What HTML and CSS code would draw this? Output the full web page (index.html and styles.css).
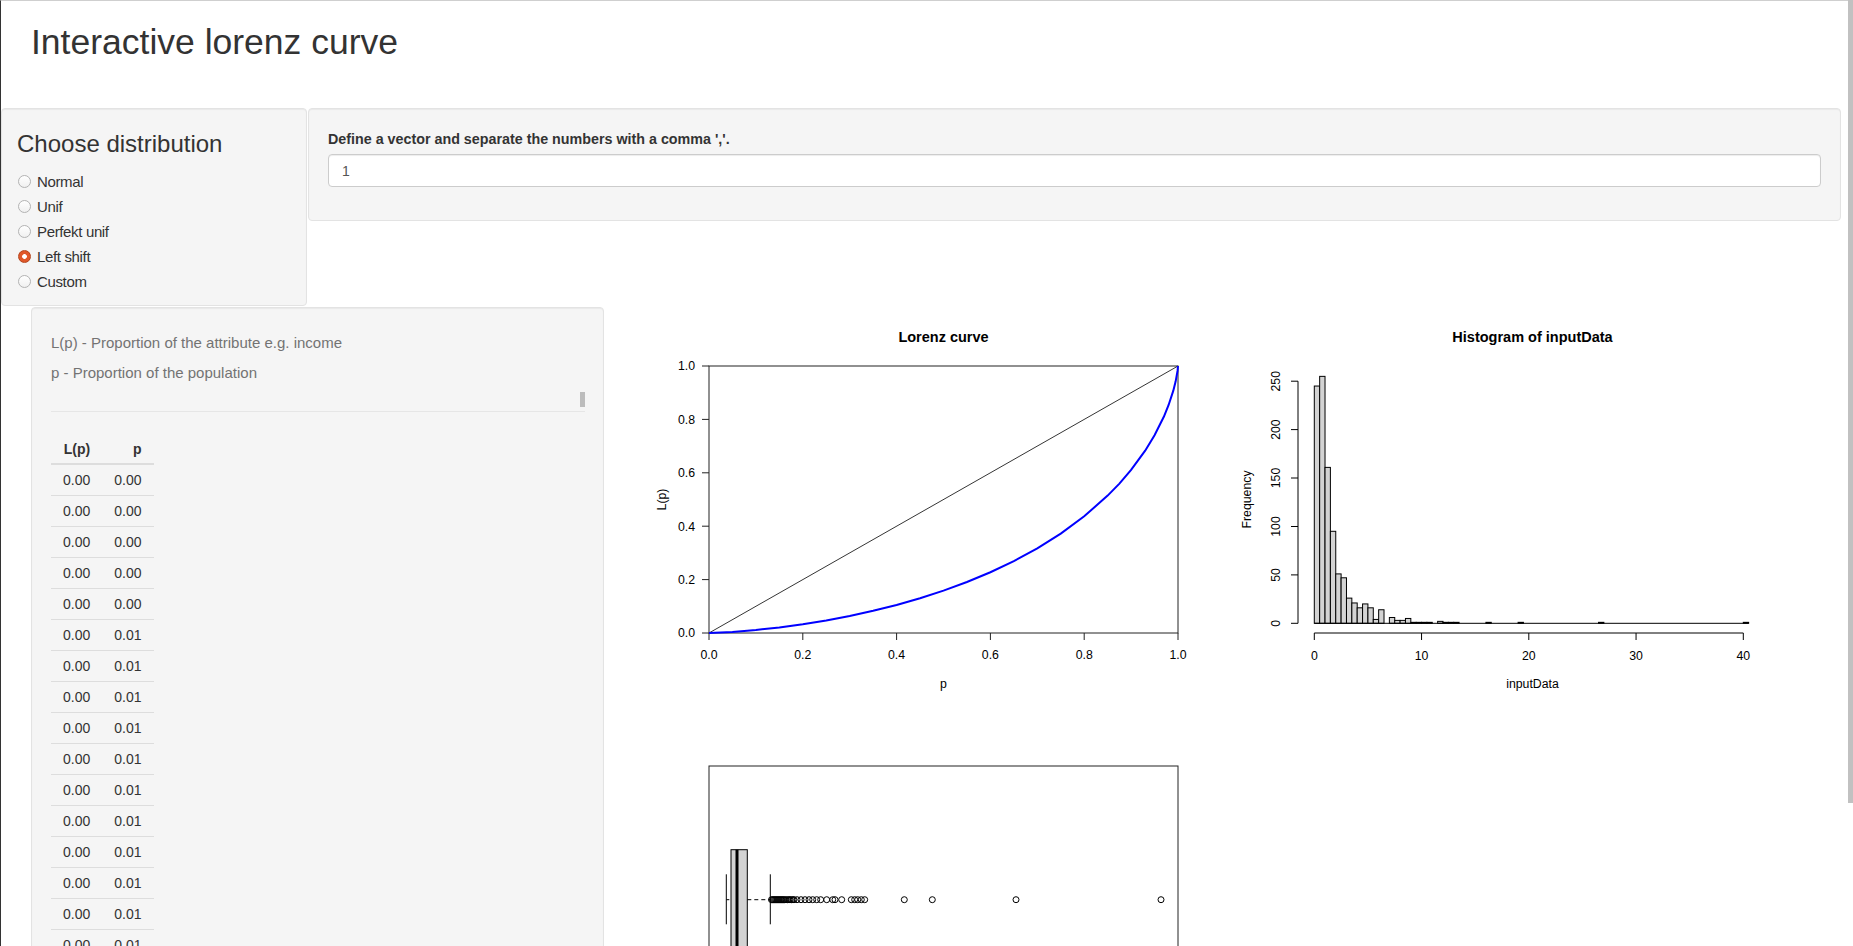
FILE: index.html
```html
<!DOCTYPE html>
<html lang="en">
<head>
  <meta charset="UTF-8">
  <title>Interactive lorenz curve</title>
  <link rel="stylesheet" href="styles.css">
</head>
<body>

  <h2 class="title">Interactive lorenz curve</h2>

  <!-- inputs -->
  <div class="top-row">
    <div class="well side-well">
      <h3>Choose distribution</h3>
      <label class="radio"><input type="radio" name="dist" value="normal">Normal</label>
      <label class="radio"><input type="radio" name="dist" value="unif">Unif</label>
      <label class="radio"><input type="radio" name="dist" value="perfekt">Perfekt unif</label>
      <label class="radio"><input type="radio" name="dist" value="left" checked>Left shift</label>
      <label class="radio"><input type="radio" name="dist" value="custom">Custom</label>
    </div>

    <div class="well input-well">
      <label class="field-label" for="vec">Define a vector and separate the numbers with a comma ','.</label>
      <input type="text" id="vec" class="vec-input" value="1">
    </div>
  </div>

  <!-- output -->
  <div class="bottom-row">
    <div class="well table-well">
      <p class="help">L(p) - Proportion of the attribute e.g. income</p>
      <p class="help">p - Proportion of the population</p>
      <div class="out-scroll"><span></span></div>
      <hr>
      <table class="lorenz-table">
        <thead>
          <tr><th>L(p)</th><th>p</th></tr>
        </thead>
        <tbody>
          <tr><td>0.00</td><td>0.00</td></tr>
          <tr><td>0.00</td><td>0.00</td></tr>
          <tr><td>0.00</td><td>0.00</td></tr>
          <tr><td>0.00</td><td>0.00</td></tr>
          <tr><td>0.00</td><td>0.00</td></tr>
          <tr><td>0.00</td><td>0.01</td></tr>
          <tr><td>0.00</td><td>0.01</td></tr>
          <tr><td>0.00</td><td>0.01</td></tr>
          <tr><td>0.00</td><td>0.01</td></tr>
          <tr><td>0.00</td><td>0.01</td></tr>
          <tr><td>0.00</td><td>0.01</td></tr>
          <tr><td>0.00</td><td>0.01</td></tr>
          <tr><td>0.00</td><td>0.01</td></tr>
          <tr><td>0.00</td><td>0.01</td></tr>
          <tr><td>0.00</td><td>0.01</td></tr>
          <tr><td>0.00</td><td>0.01</td></tr>
          <tr><td>0.00</td><td>0.01</td></tr>
        </tbody>
      </table>
    </div>

    <div class="plots">
      <!-- lorenz curve -->
      <svg class="plot" width="587" height="400" viewBox="0 0 587 400">
        <text class="main" x="293.5" y="35" text-anchor="middle">Lorenz curve</text>
        <rect x="59" y="59" width="469" height="267" fill="none" stroke="#222" stroke-width="1"/>
        <g stroke="#222">
          <line x1="59" y1="326" x2="52" y2="326"/>
          <line x1="59" y1="272.6" x2="52" y2="272.6"/>
          <line x1="59" y1="219.2" x2="52" y2="219.2"/>
          <line x1="59" y1="165.8" x2="52" y2="165.8"/>
          <line x1="59" y1="112.4" x2="52" y2="112.4"/>
          <line x1="59" y1="59" x2="52" y2="59"/>
          <line x1="59" y1="326" x2="59" y2="333"/>
          <line x1="152.8" y1="326" x2="152.8" y2="333"/>
          <line x1="246.6" y1="326" x2="246.6" y2="333"/>
          <line x1="340.4" y1="326" x2="340.4" y2="333"/>
          <line x1="434.2" y1="326" x2="434.2" y2="333"/>
          <line x1="528" y1="326" x2="528" y2="333"/>
        </g>
        <g text-anchor="end">
          <text x="45" y="330.3">0.0</text>
          <text x="45" y="276.9">0.2</text>
          <text x="45" y="223.5">0.4</text>
          <text x="45" y="170.1">0.6</text>
          <text x="45" y="116.7">0.8</text>
          <text x="45" y="63.3">1.0</text>
        </g>
        <g text-anchor="middle">
          <text x="59" y="351.5">0.0</text>
          <text x="152.8" y="351.5">0.2</text>
          <text x="246.6" y="351.5">0.4</text>
          <text x="340.4" y="351.5">0.6</text>
          <text x="434.2" y="351.5">0.8</text>
          <text x="528" y="351.5">1.0</text>
          <text x="293.5" y="380.5">p</text>
          <text transform="translate(16 192.5) rotate(-90)">L(p)</text>
        </g>
        <line x1="59" y1="326" x2="528" y2="59" stroke="#000" stroke-width="0.8"/>
        <polyline fill="none" stroke="#0000ff" stroke-width="2"
          points="59,326 82.45,324.91 105.9,322.99 129.35,320.43 152.8,317.25 176.25,313.45 199.7,308.99 223.15,303.84 246.6,297.95 270.05,291.25 293.5,283.64 316.95,275.01 340.4,265.23 363.85,254.07 387.3,241.31 410.75,226.57 434.2,209.3 457.65,188.62 469.4,176.6 481.1,162.9 495.17,143.67 504.55,128.29 513.93,109.52 518.62,97.98 523.31,83.66 525.66,74.36 527.53,63.89 528,59"/>
      </svg>

      <!-- histogram -->
      <svg class="plot" width="587" height="400" viewBox="0 0 587 400">
        <text class="main" x="293.5" y="35" text-anchor="middle">Histogram of inputData</text>
        <g fill="#d3d3d3" stroke="#000" stroke-width="1">
          <rect x="75.3" y="79.04" width="5.36" height="237.26"/>
          <rect x="80.66" y="69.36" width="5.36" height="246.94"/>
          <rect x="86.03" y="160.39" width="5.36" height="155.91"/>
          <rect x="91.39" y="224.3" width="5.36" height="92"/>
          <rect x="96.75" y="266.91" width="5.36" height="49.39"/>
          <rect x="102.11" y="270.79" width="5.36" height="45.51"/>
          <rect x="107.48" y="291.12" width="5.36" height="25.18"/>
          <rect x="112.84" y="295.96" width="5.36" height="20.34"/>
          <rect x="118.2" y="300.81" width="5.36" height="15.49"/>
          <rect x="123.56" y="296.93" width="5.36" height="19.37"/>
          <rect x="128.93" y="300.81" width="5.36" height="15.49"/>
          <rect x="134.29" y="312.43" width="5.36" height="3.87"/>
          <rect x="139.65" y="302.74" width="5.36" height="13.56"/>
          <rect x="150.38" y="310.49" width="5.36" height="5.81"/>
          <rect x="155.74" y="313.39" width="5.36" height="2.91"/>
          <rect x="161.1" y="313.39" width="5.36" height="2.91"/>
          <rect x="166.46" y="311.46" width="5.36" height="4.84"/>
          <rect x="171.83" y="315.33" width="5.36" height="0.97"/>
          <rect x="177.19" y="315.33" width="5.36" height="0.97"/>
          <rect x="182.55" y="315.33" width="5.36" height="0.97"/>
          <rect x="187.91" y="315.33" width="5.36" height="0.97"/>
          <rect x="198.64" y="314.36" width="5.36" height="1.94"/>
          <rect x="204" y="315.33" width="5.36" height="0.97"/>
          <rect x="209.36" y="315.33" width="5.36" height="0.97"/>
          <rect x="214.73" y="315.33" width="5.36" height="0.97"/>
          <rect x="246.9" y="315.33" width="5.36" height="0.97"/>
          <rect x="279.08" y="315.33" width="5.36" height="0.97"/>
          <rect x="359.51" y="315.33" width="5.36" height="0.97"/>
          <rect x="504.3" y="315.33" width="5.36" height="0.97"/>
        </g>
        <g stroke="#000" stroke-width="1">
          <line x1="75.3" y1="316.3" x2="509.66" y2="316.3"/>
          <line x1="75.3" y1="326" x2="504.3" y2="326"/>
          <line x1="75.3" y1="326" x2="75.3" y2="333"/>
          <line x1="182.55" y1="326" x2="182.55" y2="333"/>
          <line x1="289.8" y1="326" x2="289.8" y2="333"/>
          <line x1="397.05" y1="326" x2="397.05" y2="333"/>
          <line x1="504.3" y1="326" x2="504.3" y2="333"/>
          <line x1="59" y1="316.3" x2="59" y2="74.2"/>
          <line x1="59" y1="316.3" x2="52" y2="316.3"/>
          <line x1="59" y1="267.9" x2="52" y2="267.9"/>
          <line x1="59" y1="219.5" x2="52" y2="219.5"/>
          <line x1="59" y1="171" x2="52" y2="171"/>
          <line x1="59" y1="122.6" x2="52" y2="122.6"/>
          <line x1="59" y1="74.2" x2="52" y2="74.2"/>
        </g>
        <g text-anchor="middle">
          <text x="75.3" y="352.5">0</text>
          <text x="182.55" y="352.5">10</text>
          <text x="289.8" y="352.5">20</text>
          <text x="397.05" y="352.5">30</text>
          <text x="504.3" y="352.5">40</text>
          <text x="293.5" y="380.5">inputData</text>
          <text transform="translate(40.5 316.3) rotate(-90)">0</text>
          <text transform="translate(40.5 267.9) rotate(-90)">50</text>
          <text transform="translate(40.5 219.5) rotate(-90)">100</text>
          <text transform="translate(40.5 171) rotate(-90)">150</text>
          <text transform="translate(40.5 122.6) rotate(-90)">200</text>
          <text transform="translate(40.5 74.2) rotate(-90)">250</text>
          <text transform="translate(12 192.5) rotate(-90)">Frequency</text>
        </g>
      </svg>

      <!-- boxplot -->
      <svg class="plot" width="587" height="400" viewBox="0 0 587 400">
        <rect x="59" y="59" width="469" height="267" fill="none" stroke="#222" stroke-width="1"/>
        <g stroke="#000" stroke-width="1">
          <line x1="76.3" y1="167.3" x2="76.3" y2="217.3"/>
          <line x1="76.3" y1="192.7" x2="81" y2="192.7" stroke-dasharray="3 2"/>
          <rect x="81" y="142.7" width="16.3" height="99.6" fill="#d3d3d3"/>
          <line x1="87" y1="142.7" x2="87" y2="242.3" stroke-width="3"/>
          <line x1="97.3" y1="192.7" x2="120.3" y2="192.7" stroke-dasharray="4 3"/>
          <line x1="120.3" y1="167.3" x2="120.3" y2="217.3"/>
        </g>
        <g fill="none" stroke="#000" stroke-width="1">
          <circle cx="121.5" cy="192.7" r="3"/>
          <circle cx="122.5" cy="192.7" r="3"/>
          <circle cx="123.5" cy="192.7" r="3"/>
          <circle cx="124.5" cy="192.7" r="3"/>
          <circle cx="125.5" cy="192.7" r="3"/>
          <circle cx="126.5" cy="192.7" r="3"/>
          <circle cx="127.5" cy="192.7" r="3"/>
          <circle cx="128.5" cy="192.7" r="3"/>
          <circle cx="129.5" cy="192.7" r="3"/>
          <circle cx="130.5" cy="192.7" r="3"/>
          <circle cx="131.5" cy="192.7" r="3"/>
          <circle cx="132.5" cy="192.7" r="3"/>
          <circle cx="133.5" cy="192.7" r="3"/>
          <circle cx="134.5" cy="192.7" r="3"/>
          <circle cx="136" cy="192.7" r="3"/>
          <circle cx="137.5" cy="192.7" r="3"/>
          <circle cx="139" cy="192.7" r="3"/>
          <circle cx="140" cy="192.7" r="3"/>
          <circle cx="141.5" cy="192.7" r="3"/>
          <circle cx="143" cy="192.7" r="3"/>
          <circle cx="144" cy="192.7" r="3"/>
          <circle cx="147" cy="192.7" r="3"/>
          <circle cx="151" cy="192.7" r="3"/>
          <circle cx="155" cy="192.7" r="3"/>
          <circle cx="159" cy="192.7" r="3"/>
          <circle cx="162.7" cy="192.7" r="3"/>
          <circle cx="166.7" cy="192.7" r="3"/>
          <circle cx="170.7" cy="192.7" r="3"/>
          <circle cx="176.7" cy="192.7" r="3"/>
          <circle cx="182.7" cy="192.7" r="3"/>
          <circle cx="185" cy="192.7" r="3"/>
          <circle cx="191.7" cy="192.7" r="3"/>
          <circle cx="201.3" cy="192.7" r="3"/>
          <circle cx="204.7" cy="192.7" r="3"/>
          <circle cx="207.7" cy="192.7" r="3"/>
          <circle cx="211.3" cy="192.7" r="3"/>
          <circle cx="214.7" cy="192.7" r="3"/>
          <circle cx="254.3" cy="192.7" r="3"/>
          <circle cx="282.3" cy="192.7" r="3"/>
          <circle cx="366" cy="192.7" r="3"/>
          <circle cx="511" cy="192.7" r="3"/>
        </g>
      </svg>
    </div>
  </div>

  <div class="page-scroll"></div>

</body>
</html>
```

FILE: styles.css
```css
html, body {
  margin: 0;
  height: 100%;
  overflow: hidden;
}

body {
  box-sizing: border-box;
  font-family: "Liberation Sans", Arial, sans-serif;
  color: #333;
  background-color: #fff;
  border-top: 1px solid #cfcfcf;
  border-left: 1px solid #333;
}

.title {
  margin: 22px 0 46px 30px;
  font-size: 35.5px;
  font-weight: normal;
  line-height: 39px;
}

.well {
  box-sizing: border-box;
  background-color: #f5f5f5;
  border: 1px solid #e3e3e3;
  border-radius: 4px;
  box-shadow: inset 0 1px 1px rgba(0, 0, 0, 0.05);
}

/* top row */
.top-row {
  display: flex;
  align-items: flex-start;
}

.side-well {
  width: 306px;
  padding: 22px 15px 11px;
}

.side-well h3 {
  margin: 0 0 12px;
  font-size: 24px;
  font-weight: normal;
  line-height: 26.4px;
}

.radio {
  display: flex;
  align-items: center;
  height: 25px;
  font-size: 15px;
  letter-spacing: -0.35px;
}

.radio input {
  -webkit-appearance: none;
  appearance: none;
  width: 13px;
  height: 13px;
  margin: 0 6px 0 1px;
  border: 1px solid #b3b3b3;
  border-radius: 50%;
  background: linear-gradient(#fff, #f0f0f0);
}

.radio input:checked {
  border-color: #b5451d;
  background: radial-gradient(circle, #fff 0 2px, #e0582a 2.7px);
}

.input-well {
  flex: 1;
  margin: 0 12px 0 1px;
  padding: 20px 19px 33px;
}

.field-label {
  display: block;
  margin-bottom: 5px;
  font-size: 14.3px;
  font-weight: bold;
  line-height: 20px;
}

.vec-input {
  display: block;
  box-sizing: border-box;
  width: 100%;
  height: 33px;
  padding: 0 13px;
  border: 1px solid #ccc;
  border-radius: 4px;
  box-shadow: inset 0 1px 1px rgba(0, 0, 0, 0.075);
  background-color: #fff;
  font-family: "Liberation Sans", Arial, sans-serif;
  font-size: 14px;
  color: #555;
}

/* bottom row */
.bottom-row {
  display: flex;
  align-items: flex-start;
  margin-top: 1px;
}

.table-well {
  width: 573px;
  margin-left: 30px;
  padding: 25px 18px 0 19px;
}

.help {
  margin: 0 0 10px;
  font-size: 15px;
  line-height: 20px;
  color: #737373;
}

.out-scroll {
  display: flex;
  justify-content: flex-end;
  height: 15px;
  margin-top: -1px;
}

.out-scroll span {
  width: 5px;
  background-color: #bcbcbc;
}

.table-well hr {
  margin: 4px 0 22px;
  border: 0;
  border-top: 1px solid #e6e6e6;
}

.lorenz-table {
  border-spacing: 0;
  font-size: 14px;
  line-height: 20px;
}

.lorenz-table th {
  padding: 5px 12px 4px;
  border-bottom: 2px solid #ddd;
  text-align: right;
  font-weight: bold;
}

.lorenz-table td {
  padding: 5px 12px;
  border-bottom: 1px solid #ddd;
  text-align: right;
}

.plots {
  display: grid;
  grid-template-columns: 587px 587px;
  column-gap: 2px;
  margin-left: 46px;
}

.plot {
  display: block;
}

.plot text {
  font-family: "Liberation Sans", Arial, sans-serif;
  font-size: 12.3px;
  fill: #000;
}

.plot text.main {
  font-size: 14.5px;
  font-weight: bold;
}

.page-scroll {
  position: fixed;
  top: 0;
  right: 0;
  width: 5px;
  height: 803px;
  background-color: #c1c1c1;
}
```
